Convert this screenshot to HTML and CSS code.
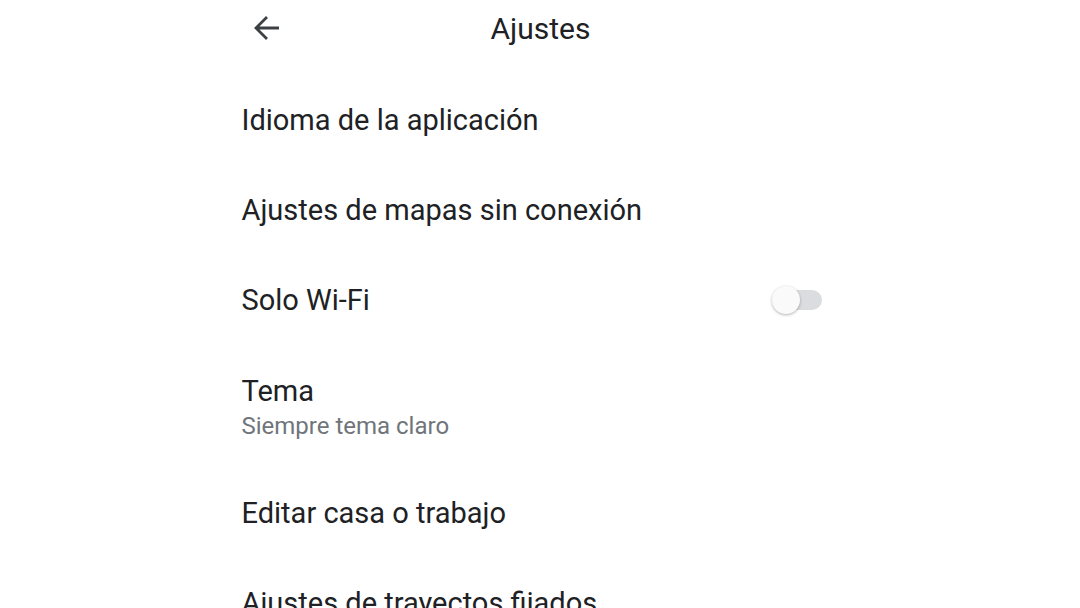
FILE: index.html
```html
<!DOCTYPE html>
<html lang="es">
<head>
  <meta charset="UTF-8">
  <title>Ajustes</title>
  <link rel="stylesheet" href="styles.css">
</head>
<body>
  <div class="screen">
    <!-- Barra superior -->
    <header class="topbar">
      <button class="back" aria-label="Atrás">
        <svg viewBox="0 0 28 28" width="28" height="28">
          <path d="M26 14H3.5M14 3L3 14l11 11"></path>
        </svg>
      </button>
      <h1 class="title">Ajustes</h1>
      <span></span>
    </header>

    <!-- Lista de ajustes -->
    <ul class="settings">
      <li class="row"><span class="label">Idioma de la aplicación</span></li>
      <li class="row"><span class="label">Ajustes de mapas sin conexión</span></li>
      <li class="row">
        <span class="label">Solo Wi-Fi</span>
        <span class="switch"><span class="thumb"></span></span>
      </li>
      <li class="row row-2">
        <div>
          <span class="label">Tema</span>
          <span class="sub">Siempre tema claro</span>
        </div>
      </li>
      <li class="row"><span class="label">Editar casa o trabajo</span></li>
      <li class="row"><span class="label">Ajustes de trayectos fijados</span></li>
    </ul>
  </div>
</body>
</html>
```

FILE: styles.css
```css
body {
  margin: 0;
  background: #fff;
  color: #202124;
  font-family: Roboto, "Noto Sans", sans-serif;
  overflow: hidden;
}
.screen {
  width: 598px;
  margin: 0 auto;
  padding-left: 1px;
}
/* Barra superior */
.topbar {
  display: grid;
  grid-template-columns: 1fr auto 1fr;
  align-items: center;
  height: 56px;
  margin-bottom: 19px;
}
.back {
  justify-self: start;
  background: none;
  border: 0;
  padding: 0 0 0 11px;
  display: flex;
}
.back svg {
  fill: none;
  stroke: #3c4043;
  stroke-width: 2.8;
}
.title {
  margin: 0;
  font-size: 30px;
  font-weight: 400;
  color: #202124;
}
/* Filas */
.settings {
  list-style: none;
  margin: 0;
  padding: 0;
}
.row {
  display: flex;
  align-items: center;
  justify-content: space-between;
  height: 90px;
  padding-right: 18px;
}
.row-2 {
  height: 123px;
}
.label {
  display: block;
  font-size: 29px;
}
.sub {
  display: block;
  font-size: 24px;
  color: #70757a;
  margin-top: 4px;
}
/* Interruptor apagado */
.switch {
  position: relative;
  width: 46px;
  height: 20px;
  border-radius: 10px;
  background: #dadce0;
}
.thumb {
  position: absolute;
  left: -4px;
  top: -4px;
  width: 28px;
  height: 28px;
  border-radius: 50%;
  background: #fafafa;
  box-shadow: 0 1px 3px rgba(0, 0, 0, 0.3);
}
```
